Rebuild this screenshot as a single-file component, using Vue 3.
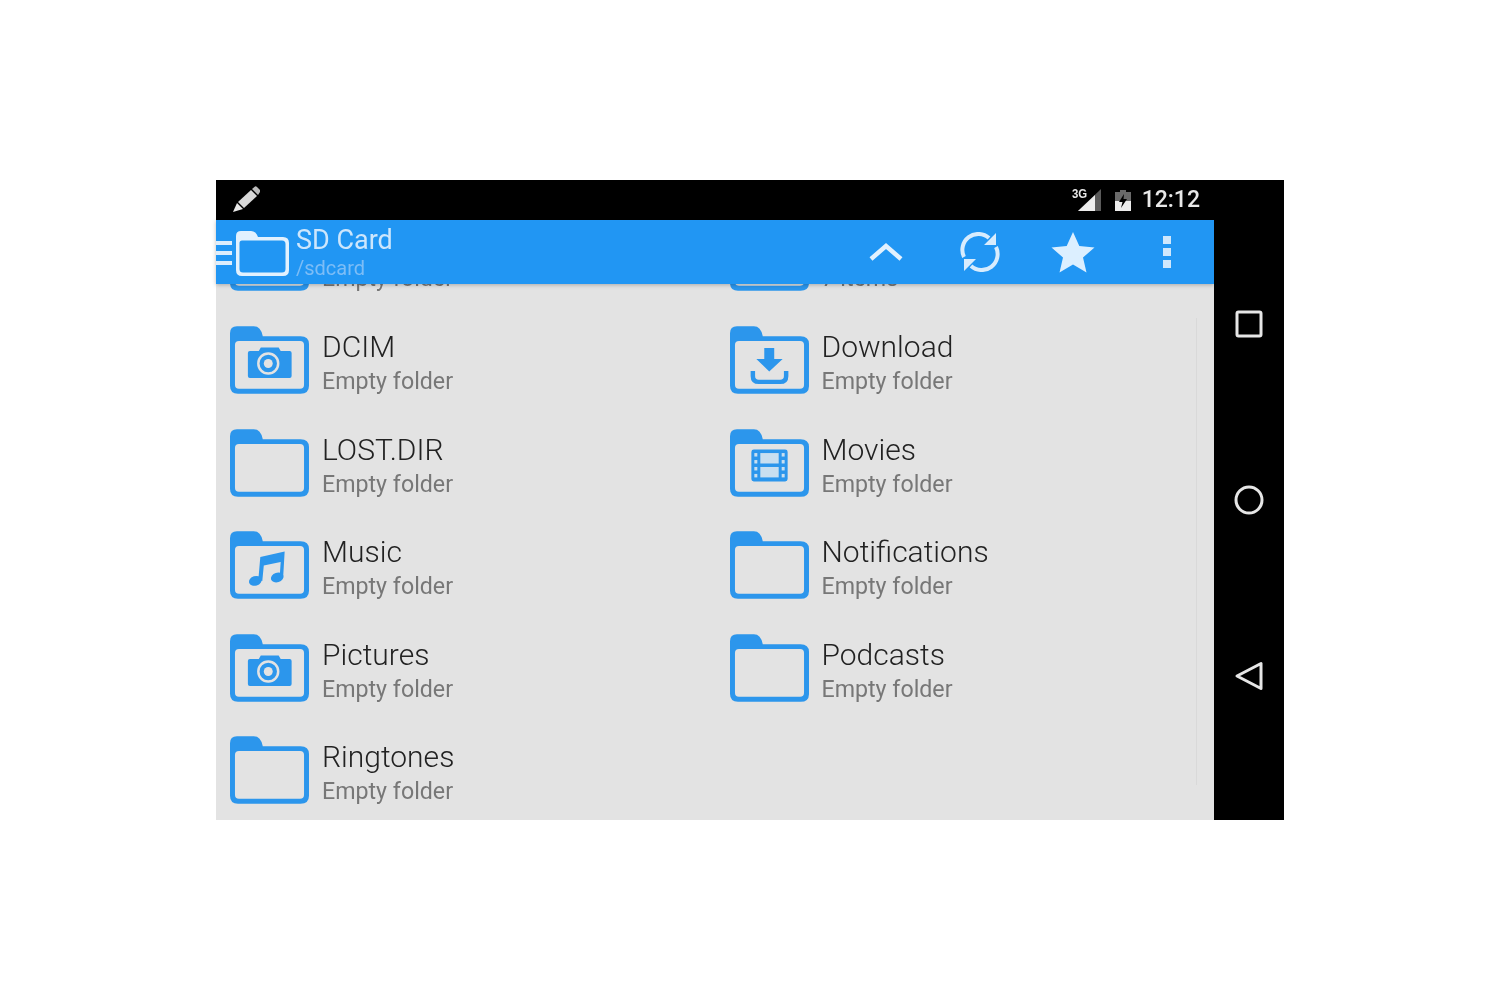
<template>
  <div class="page">
    <div class="phone">
      <div class="main">
        <div class="status">
          <svg class="pencil" viewBox="0 0 28 26">
            <path d="M1 26 L5 17 L11 23 Z" fill="#e8e8e8" />
            <path d="M6 16 L19 4 L25 10 L12 22 Z" fill="#d8d8d8" />
            <path d="M20 3 L23 0.5 Q24 0 25 1 L28 4 Q28.5 5 28 6 L26 9 Z" fill="#bdbdbd" />
          </svg>
          <div class="status-right">
            <div class="signal">
              <span class="net">3G</span>
              <svg class="signal-bars" viewBox="0 0 23 22">
                <path d="M0 22 L23 0 V22 Z" fill="#5a5a5a" />
                <path d="M0 22 L17 6 V22 Z" fill="#ececec" />
              </svg>
            </div>
            <svg class="battery" viewBox="0 0 16 21">
              <path d="M5 0 H11 V2 H16 V21 H0 V2 H5 Z" fill="#6a6a6a" />
              <path d="M0 11 H16 V21 H0 Z" fill="#ececec" />
              <path d="M9 4 L4 12 H7.5 L6 18 L12 9 H8.5 Z" fill="#000" />
            </svg>
            <span class="time">12:12</span>
          </div>
        </div>
        <header class="toolbar">
          <div class="burger"><i></i><i></i><i></i></div>
          <svg class="root-folder" viewBox="0 0 53 45">
            <path fill-rule="evenodd" fill="#e2f1fe" d="M5 0 H15 Q20 0 22 6 H47 Q53 6 53 12 V39 Q53 45 47 45 H6 Q0 45 0 39 V5 Q0 0 5 0 Z M3.5 12 V38 Q3.5 41.500 7 41.500 H46 Q49.500 41.500 49.500 38 V13 Q49.500 9.500 46 9.500 H6 Q3.500 9.500 3.500 12 Z" />
          </svg>
          <div class="path">
            <div class="path-name">SD Card</div>
            <div class="path-sub">/sdcard</div>
          </div>
          <div class="actions">
            <div class="action">
              <svg width="34" height="18" viewBox="0 0 34 18"><path d="M2 16 L17 3 L32 16" fill="none" stroke="#e2f1fe" stroke-width="4.500" /></svg>
            </div>
            <div class="action">
              <svg width="40" height="40" viewBox="0 0 40 40">
                <path d="M4 25 A16 16 0 0 1 29 6" fill="none" stroke="#d8ecfd" stroke-width="4" />
                <path d="M36 15 A16 16 0 0 1 11 34" fill="none" stroke="#d8ecfd" stroke-width="4" />
                <path d="M36 1 V13 H24 Z M4 39 V27 H16 Z" fill="#d8ecfd" />
              </svg>
            </div>
            <div class="action">
              <svg width="44" height="42" viewBox="0 0 44 42"><path d="M22 1 L28.300 15 L43.500 16.500 L32 26.500 L35.500 41.500 L22 33.500 L8.500 41.500 L12 26.500 L0.500 16.500 L15.700 15 Z" fill="#dcefff" /></svg>
            </div>
            <div class="action">
              <div class="dots"><i></i><i></i><i></i></div>
            </div>
          </div>
        </header>
        <div class="body">
          <div class="grid">
            <div v-for="item in items" :key="item.name" class="row">
              <svg class="folder" viewBox="0 0 80 68">
                <path fill-rule="evenodd" fill="#2c96ec" d="M7 0 H24 Q31 0 33 10 H71 Q79.500 10 79.500 18 V60 Q79.500 68 71 68 H8 Q0 68 0 60 V7 Q0 0 7 0 Z M5 19 V59 Q5 63 9 63 H70.500 Q74.500 63 74.500 59 V19 Q74.500 15 70.500 15 H9 Q5 15 5 19 Z" />
                <g v-if="item.icon === 'camera'">
                  <path fill="#2c96ec" d="M18 27 Q18 25 20 25 H29 L31 21.500 H49 L51 25 H60 Q62 25 62 27 V50 Q62 52 60 52 H20 Q18 52 18 50 Z" />
                  <circle cx="38.500" cy="37.500" r="10" fill="none" stroke="#e3e3e3" stroke-width="2.500" />
                  <circle cx="38.500" cy="37.500" r="4.500" fill="#e3e3e3" />
                </g>
                <g v-else-if="item.icon === 'download'" fill="#2c96ec">
                  <path d="M34.500 22 H44.500 V33 H53 L39.500 45.500 L26.500 33 H34.500 Z" />
                  <path d="M23 45 V50 Q23 56 29 56 H50.500 Q56.500 56 56.500 50 V45" fill="none" stroke="#2c96ec" stroke-width="4.500" />
                </g>
                <g v-else-if="item.icon === 'film'">
                  <rect x="21.500" y="20.500" width="36.500" height="32" rx="2.500" fill="#2c96ec" />
                  <rect x="30.500" y="24" width="18.500" height="10.500" fill="#c9dff0" />
                  <rect x="30.500" y="38" width="18.500" height="10.500" fill="#c9dff0" />
                  <rect v-for="y in [24, 31, 38, 45]" :key="'l' + y" x="24.500" :y="y" width="3" height="3.500" fill="#c9dff0" />
                  <rect v-for="y in [24, 31, 38, 45]" :key="'r' + y" x="52" :y="y" width="3" height="3.500" fill="#c9dff0" />
                </g>
                <g v-else-if="item.icon === 'music'" fill="#2c96ec">
                  <ellipse cx="25.500" cy="50" rx="6.500" ry="4.800" transform="rotate(-18 25.500 50)" />
                  <ellipse cx="47.500" cy="46.500" rx="6.500" ry="4.800" transform="rotate(-18 47.500 46.500)" />
                  <path d="M28.500 49 L30.500 26 L55 20.500 L53.500 46 H50 L51 31 L34 34.500 L32.500 50 Z" />
                </g>
              </svg>
              <div class="labels">
                <div class="name">{{ item.name }}</div>
                <div class="sub">{{ item.sub }}</div>
              </div>
            </div>
          </div>
          <div class="scrollbar"></div>
        </div>
      </div>
      <nav class="rail">
        <svg width="30" height="30" viewBox="0 0 30 30"><rect x="3" y="3" width="24" height="24" rx="1.500" fill="none" stroke="#e6e6e6" stroke-width="3" /></svg>
        <svg width="30" height="30" viewBox="0 0 30 30"><circle cx="15" cy="15" r="13" fill="none" stroke="#e6e6e6" stroke-width="3" /></svg>
        <svg width="30" height="30" viewBox="0 0 30 30"><path d="M3 15 L27 2.500 V27.500 Z" fill="none" stroke="#e6e6e6" stroke-width="3" stroke-linejoin="round" /></svg>
      </nav>
    </div>
  </div>
</template>

<script setup>
const items = [
  { name: 'Alarms', sub: 'Empty folder', icon: 'none' },
  { name: 'Android', sub: '7 items', icon: 'none' },
  { name: 'DCIM', sub: 'Empty folder', icon: 'camera' },
  { name: 'Download', sub: 'Empty folder', icon: 'download' },
  { name: 'LOST.DIR', sub: 'Empty folder', icon: 'none' },
  { name: 'Movies', sub: 'Empty folder', icon: 'film' },
  { name: 'Music', sub: 'Empty folder', icon: 'music' },
  { name: 'Notifications', sub: 'Empty folder', icon: 'none' },
  { name: 'Pictures', sub: 'Empty folder', icon: 'camera' },
  { name: 'Podcasts', sub: 'Empty folder', icon: 'none' },
  { name: 'Ringtones', sub: 'Empty folder', icon: 'none' }
]
</script>

<style>
html, body { margin: 0; background: #fff; }
</style>

<style scoped>
.page {
  width: 1500px;
  height: 1000px;
  box-sizing: border-box;
  padding: 180px 216px;
  background: #fff;
  font-family: Roboto, "Liberation Sans", sans-serif;
}
.phone {
  width: 1068px;
  height: 640px;
  display: flex;
  background: #000;
  filter: blur(0.7px);
}
.main {
  width: 998px;
  display: flex;
  flex-direction: column;
}
.status {
  height: 40px;
  flex: none;
  display: flex;
  align-items: center;
  justify-content: space-between;
  padding: 0 14px 0 16px;
  background: #000;
}
.pencil { width: 28px; height: 26px; margin-top: -2px; }
.status-right { display: flex; align-items: center; gap: 14px; }
.signal { position: relative; width: 30px; height: 24px; }
.net {
  position: absolute;
  left: 1px;
  top: -1px;
  font: 700 12px/14px "Liberation Sans", sans-serif;
  transform: scaleX(0.95);
  transform-origin: left;
  color: #e8e8e8;
}
.signal-bars { position: absolute; right: 0; top: 1px; width: 23px; height: 22px; }
.battery { width: 16px; height: 21px; }
.time {
  font-size: 23px;
  line-height: 40px;
  font-weight: 500;
  color: #e8e8e8;
  margin-left: -3px;
}
.toolbar {
  position: relative;
  z-index: 1;
  height: 64px;
  flex: none;
  display: flex;
  align-items: center;
  background: #2196f3;
  box-shadow: 0 1px 4px rgba(0, 0, 0, 0.25);
}
.burger { width: 16px; display: flex; flex-direction: column; gap: 6px; margin-top: 2px; }
.burger i { display: block; height: 4px; background: #dcedfc; }
.root-folder { width: 53px; height: 45px; flex: none; margin: 2px 7px 0 4px; }
.path-name { font-size: 27px; line-height: 32px; color: #cde6fc; }
.path-sub { font-size: 20px; line-height: 24px; color: #7dbdf6; }
.actions { margin-left: auto; display: flex; }
.action { width: 94px; display: flex; align-items: center; justify-content: center; }
.action:nth-child(-n+2) { padding-left: 2px; box-sizing: border-box; }
.dots { display: flex; flex-direction: column; gap: 4px; }
.dots i { display: block; width: 8px; height: 8px; background: #cfe7fc; }
.body {
  position: relative;
  flex: 1;
  overflow: hidden;
  background: #e3e3e3;
}
.grid {
  margin-top: -77.9px;
  display: grid;
  grid-template-columns: 499.5px 498.5px;
  grid-auto-rows: 102.6px;
}
.row {
  display: flex;
  align-items: center;
  gap: 12.5px;
  padding-left: 14px;
}
.folder { width: 79.5px; height: 68px; flex: none; }
.labels { padding-top: 6px; }
.name { font-size: 30px; line-height: 36px; font-weight: 300; color: #222; }
.sub { font-size: 23.2px; line-height: 32px; color: #777; }
.scrollbar {
  position: absolute;
  left: 980px;
  top: 34px;
  width: 1px;
  height: 467px;
  background: #d9d9d9;
}
.rail {
  width: 70px;
  display: flex;
  flex-direction: column;
  align-items: center;
  justify-content: center;
  gap: 146px;
}
</style>
